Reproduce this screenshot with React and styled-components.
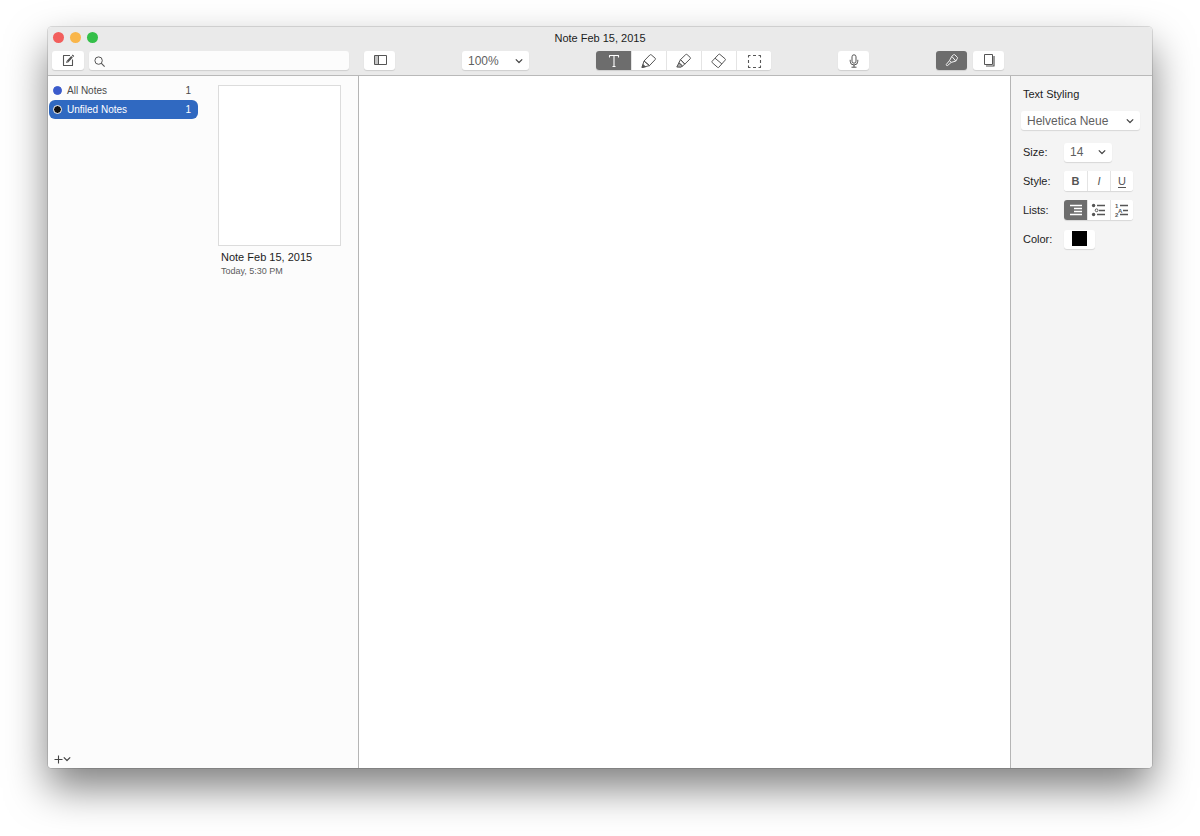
import { useState } from "react";
import styled, { createGlobalStyle } from "styled-components";

const GlobalStyle = createGlobalStyle`
  * {
    box-sizing: border-box;
  }
  body {
    margin: 0;
    background-color: white;
    font-family: "Liberation Sans", Arial, sans-serif;
    font-size: 11px;
    color: #1c1c1c;
  }
  button, input, select {
    font: inherit;
    color: inherit;
    margin: 0;
    padding: 0;
    border: none;
  }
  svg {
    display: block;
    flex: none;
  }
`;

const Desktop = styled.div`
  display: flex;
  min-height: 100vh;
  padding: 27px 48px 68px;
`;

const Window = styled.div`
  flex: 1;
  min-width: 0;
  display: flex;
  flex-direction: column;
  overflow: hidden;
  border-radius: 4px;
  background-color: white;
  box-shadow: 0 0 0 1px rgba(0, 0, 0, 0.12), 0 20px 40px rgba(0, 0, 0, 0.5);
`;

const Header = styled.header`
  background-color: #eaeaea;
  border-bottom: 1px solid #b9b9b9;
`;

const TitleBar = styled.div`
  display: grid;
  grid-template-columns: 1fr auto 1fr;
  align-items: center;
  height: 21px;
  padding: 0 5px;
`;

const Lights = styled.div`
  display: flex;
  gap: 6px;
`;

const Light = styled.button`
  width: 11px;
  height: 11px;
  border-radius: 50%;
  background-color: ${(props) => props.$color};
`;

const Title = styled.h1`
  margin: 0;
  font-size: 11px;
  font-weight: normal;
`;

const Toolbar = styled.div`
  display: flex;
  align-items: center;
  height: 27px;
  padding: 0 0 2px 4px;
`;

const ToolbarLeft = styled.div`
  display: flex;
  gap: 5px;
  width: 312px;
`;

const ToolbarMain = styled.div`
  flex: 1;
  display: flex;
  align-items: center;
  justify-content: space-between;
  padding-right: 148px;
`;

const Pair = styled.div`
  display: flex;
  gap: 6px;
`;

const Button = styled.button`
  display: flex;
  align-items: center;
  justify-content: center;
  width: ${(props) => props.$width || 31}px;
  height: 19px;
  border-radius: 3px;
  color: ${(props) => (props.$active ? "#f4f4f4" : "#555")};
  background-color: ${(props) => (props.$active ? "#6d6d6d" : "white")};
  box-shadow: 0 1px 1px rgba(0, 0, 0, 0.12);
`;

const Search = styled.label`
  display: flex;
  align-items: center;
  gap: 5px;
  width: 260px;
  height: 19px;
  padding: 2px 5px 0;
  border-radius: 3px;
  color: #555;
  background-color: #fcfcfc;
  box-shadow: 0 1px 1px rgba(0, 0, 0, 0.12);
`;

const SearchInput = styled.input`
  flex: 1;
  min-width: 0;
  background: none;
  outline: none;
`;

const Group = styled.div`
  display: flex;
  border-radius: 3px;
  overflow: hidden;
  background-color: white;
  box-shadow: 0 1px 1px rgba(0, 0, 0, 0.12);
`;

const Segment = styled.button`
  display: flex;
  align-items: center;
  justify-content: center;
  width: ${(props) => props.$width}px;
  height: ${(props) => props.$height || 19}px;
  color: ${(props) => (props.$active ? "white" : "#555")};
  background-color: ${(props) => (props.$active ? "#6d6d6d" : "white")};
  & + & {
    border-left: 1px solid #e4e4e4;
  }
`;

const SelectBox = styled.div`
  display: grid;
  align-items: center;
  width: ${(props) => props.$width};
  height: 19px;
  border-radius: 3px;
  color: #5f5f5f;
  background-color: white;
  box-shadow: 0 1px 1px rgba(0, 0, 0, 0.12);
  > * {
    grid-area: 1 / 1;
  }
  > svg {
    justify-self: end;
    margin-right: 6px;
    color: #444;
    pointer-events: none;
  }
`;

const NativeSelect = styled.select`
  appearance: none;
  width: 100%;
  height: 19px;
  padding: 0 20px 0 6px;
  font-size: 12px;
  background: none;
`;

const Body = styled.div`
  flex: 1;
  display: flex;
`;

const Sidebar = styled.aside`
  display: grid;
  grid-template-columns: 149px 123px;
  grid-template-rows: 1fr auto;
  column-gap: 20px;
  width: 311px;
  padding-left: 1px;
  background-color: #fcfcfc;
  border-right: 1px solid #b5b5b5;
`;

const Folders = styled.nav`
  padding-top: 5px;
`;

const Folder = styled.button`
  display: flex;
  align-items: center;
  gap: 5px;
  width: 100%;
  height: 19px;
  padding: 0 7px 0 4px;
  border-radius: 6px;
  font-size: 10px;
  text-align: left;
  color: ${(props) => (props.$active ? "white" : "#4a4a4a")};
  background-color: ${(props) => (props.$active ? "#3069c1" : "transparent")};
`;

const Dot = styled.span`
  width: 9px;
  height: 9px;
  border-radius: 50%;
  background-color: ${(props) => props.$color};
  border: 1px solid ${(props) => props.$ring};
`;

const FolderName = styled.span`
  flex: 1;
`;

const Notes = styled.section`
  padding-top: 9px;
`;

const Note = styled.button`
  display: flex;
  flex-direction: column;
  width: 100%;
  text-align: left;
  background: none;
`;

const Thumbnail = styled.span`
  width: 100%;
  height: 161px;
  margin-bottom: 4px;
  background-color: white;
  border: 1px solid #dcdcdc;
`;

const NoteTitle = styled.span`
  padding-left: 3px;
  line-height: 14px;
`;

const NoteDate = styled.span`
  padding-left: 3px;
  font-size: 9px;
  line-height: 14px;
  color: #5c5c5c;
`;

const AddButton = styled.button`
  display: flex;
  align-items: center;
  width: 24px;
  height: 18px;
  margin-left: 5px;
  color: #444;
  background: none;
`;

const Page = styled.main`
  flex: 1;
  background-color: white;
`;

const Inspector = styled.aside`
  display: flex;
  flex-direction: column;
  width: 142px;
  padding: 12px 12px 0 10px;
  background-color: #f4f4f4;
  border-left: 1px solid #b5b5b5;
`;

const Heading = styled.h2`
  margin: 0 0 10px;
  padding-left: 2px;
  font-size: 11px;
  line-height: 13px;
  font-weight: normal;
`;

const Fields = styled.div`
  display: grid;
  grid-template-columns: 41px auto;
  grid-auto-rows: 20px;
  row-gap: 9px;
  align-items: center;
  justify-content: start;
  padding: 12px 0 0 2px;
`;

const Label = styled.label`
  color: #1c1c1c;
`;

const Swatch = styled.input`
  appearance: none;
  display: block;
  width: 31px;
  height: 19px;
  padding: 1px 8px 3px;
  border-radius: 3px;
  background-color: white;
  box-shadow: 0 1px 1px rgba(0, 0, 0, 0.12);
  &::-webkit-color-swatch-wrapper {
    padding: 0;
  }
  &::-webkit-color-swatch {
    border: none;
    border-radius: 0;
  }
`;

const Bold = styled.b`
  font-size: 11px;
`;

const Italic = styled.i`
  font-size: 11px;
`;

const Underline = styled.u`
  font-size: 11px;
  text-underline-offset: 2px;
`;

const Icon = ({ width = 16, height = 16, children }) => (
  <svg
    width={width}
    height={height}
    viewBox={`0 0 ${width} ${height}`}
    fill="none"
    stroke="currentColor"
    strokeWidth="1"
    strokeLinejoin="round"
    aria-hidden="true"
  >
    {children}
  </svg>
);

const ChevronIcon = () => (
  <Icon width={8} height={6}>
    <path d="M.8 1.4 4 4.5 7.2 1.4" strokeWidth="1.2" />
  </Icon>
);

const ComposeIcon = () => (
  <Icon>
    <path d="M10 2.5H3.5v10h9V6.5" strokeWidth="1.1" />
    <path d="M7.6 8.4 12 3.8" strokeWidth="2.2" />
    <path d="m12.6 3.2.9-.9" strokeWidth="2.2" />
    <path d="m6 10.1.7-2.4 1.8 1.6z" fill="currentColor" stroke="none" />
  </Icon>
);

const SearchIcon = () => (
  <Icon width={11} height={11}>
    <circle cx="4.6" cy="4.6" r="3.7" />
    <path d="m7.2 7.2 3.4 3.4" strokeWidth="1.1" />
  </Icon>
);

const PanelIcon = () => (
  <Icon>
    <rect x="2.5" y="2.5" width="12" height="9" />
    <path d="M3 3h3v8H3z" fill="#c4c4c4" stroke="none" />
    <path d="M6.5 2.5v9" />
  </Icon>
);

const TextIcon = () => (
  <Icon>
    <path d="M3.5 4.5v-2h9v2M8 2.5v11M6.5 13.5h3" strokeWidth="1.1" />
  </Icon>
);

const PenIcon = () => (
  <Icon>
    <path d="M3 8 8.8 2q.7-.7 1.5-.1l3.8 3.2q.8.7.1 1.5l-5.7 6z" />
    <path d="M3 8 1 14.5l7.5-1.9M3 8l5.5 4.6" />
    <path d="m1 14.5.9-2.9 2.5 2.1z" fill="currentColor" />
  </Icon>
);

const HighlighterIcon = () => (
  <Icon>
    <path d="m4.5 6.6 5.2-5q.7-.6 1.4 0l3.1 2.8q.7.7 0 1.4l-5.4 5.3z" />
    <path d="M4.5 6.6 2.9 9.8l3.6 3.2 2.3-1.9M4.5 6.6l4.3 4.5" />
    <path d="M2.9 9.8.8 14l4 .2L6.5 13z" fill="#aaa" />
  </Icon>
);

const EraserIcon = () => (
  <Icon>
    <path d="m1.1 8.3 6.5-6.9q.6-.6 1.3 0l5.2 4.4q.7.6.1 1.3l-6.4 7.2q-.6.6-1.3 0L1.2 9.6q-.7-.6-.1-1.3Z" />
    <path d="m4 5.2 6.9 5.7" />
  </Icon>
);

const MarqueeIcon = () => (
  <Icon>
    <path
      d="M2.5 4.5v-2h2M12.5 2.5h2v2M14.5 12.5v2h-2M4.5 14.5h-2v-2M7 2.5h3M7 14.5h3M2.5 7v3M14.5 7v3"
      strokeWidth="1.1"
    />
  </Icon>
);

const MicIcon = () => (
  <Icon>
    <rect x="6" y="1.8" width="4" height="8.4" rx="2" />
    <path d="M4.2 6.8v1.4a3.8 3.8 0 0 0 7.6 0V6.8M8 12v2.2M5.5 14.2h5" />
  </Icon>
);

const BrushIcon = () => (
  <Icon>
    <path d="m7.8 3.4 1.7-1.7q.6-.5 1.3.1l2.4 2.3q.6.6.2 1.3l-1.6 2.7L7.2 9.4 5.5 7.6Z" />
    <path d="M5.5 7.6 2.4 11.3q-.4.6.1 1.1t1.1.1l3.6-3.1M7.8 3.4l4 4.7" />
  </Icon>
);

const PagesIcon = () => (
  <Icon>
    <rect x="3.5" y="1.5" width="8" height="10" />
    <path d="M13 3v10H5" strokeWidth="1.2" />
  </Icon>
);

const AlignIcon = () => (
  <Icon>
    <path d="M2 3.5h12M6 6.5h8M6 9.5h8M2 12.5h12" strokeWidth="1.3" />
  </Icon>
);

const BulletIcon = () => (
  <Icon>
    <path d="M6 3.5h8M8 8.5h6M6 12.5h8" strokeWidth="1.4" />
    <circle cx="2.6" cy="3.5" r="1.7" fill="currentColor" stroke="none" />
    <circle cx="2.6" cy="12.5" r="1.7" fill="currentColor" stroke="none" />
    <circle cx="5.6" cy="8.3" r="1.4" />
  </Icon>
);

const NumberIcon = () => (
  <Icon>
    <path d="M6 3.5h8M9 8.5h5M6 12.5h8" strokeWidth="1.4" />
    <g fill="currentColor" stroke="none" fontSize="6" fontWeight="bold">
      <text x="1" y="6">1</text>
      <text x="4" y="11">A</text>
      <text x="1" y="15">2</text>
    </g>
  </Icon>
);

const PlusIcon = () => (
  <Icon width={9} height={9}>
    <path d="M4.5.5v8M.5 4.5h8" strokeWidth="1.1" />
  </Icon>
);

const tools = [
  { name: "Text", icon: TextIcon },
  { name: "Pen", icon: PenIcon },
  { name: "Highlighter", icon: HighlighterIcon },
  { name: "Eraser", icon: EraserIcon },
  { name: "Selection", icon: MarqueeIcon },
];

const lists = [
  { name: "No list", icon: AlignIcon },
  { name: "Bulleted list", icon: BulletIcon },
  { name: "Numbered list", icon: NumberIcon },
];

const styles = [
  { name: "Bold", mark: <Bold>B</Bold> },
  { name: "Italic", mark: <Italic>I</Italic> },
  { name: "Underline", mark: <Underline>U</Underline> },
];

const folders = [
  { name: "All Notes", count: 1, color: "#3b5bcb", ring: "#3b5bcb" },
  { name: "Unfiled Notes", count: 1, color: "#111", ring: "white" },
];

const Select = ({ width, options, ...rest }) => (
  <SelectBox $width={width}>
    <NativeSelect {...rest}>
      {options.map((option) => (
        <option key={option}>{option}</option>
      ))}
    </NativeSelect>
    <ChevronIcon />
  </SelectBox>
);

const App = () => {
  const [tool, setTool] = useState("Text");
  const [list, setList] = useState("No list");
  const [folder, setFolder] = useState("Unfiled Notes");

  return (
    <Desktop>
      <GlobalStyle />
      <Window>
        <Header>
          <TitleBar>
            <Lights>
              <Light $color="#f25e5c" aria-label="Close" />
              <Light $color="#f9b64b" aria-label="Minimize" />
              <Light $color="#34bf49" aria-label="Zoom" />
            </Lights>
            <Title>Note Feb 15, 2015</Title>
          </TitleBar>
          <Toolbar>
            <ToolbarLeft>
              <Button $width={32} aria-label="New note">
                <ComposeIcon />
              </Button>
              <Search>
                <SearchIcon />
                <SearchInput type="search" aria-label="Search notes" />
              </Search>
            </ToolbarLeft>
            <ToolbarMain>
              <Button aria-label="Toggle sidebar">
                <PanelIcon />
              </Button>
              <Select
                width="67px"
                aria-label="Page zoom"
                options={["100%", "150%", "200%"]}
              />
              <Group>
                {tools.map(({ name, icon: ToolIcon }) => (
                  <Segment
                    key={name}
                    $width={35}
                    $active={tool === name}
                    aria-label={name}
                    aria-pressed={tool === name}
                    onClick={() => setTool(name)}
                  >
                    <ToolIcon />
                  </Segment>
                ))}
              </Group>
              <Button aria-label="Record audio">
                <MicIcon />
              </Button>
              <Pair>
                <Button $active aria-label="Styling">
                  <BrushIcon />
                </Button>
                <Button aria-label="Pages">
                  <PagesIcon />
                </Button>
              </Pair>
            </ToolbarMain>
          </Toolbar>
        </Header>
        <Body>
          <Sidebar>
            <Folders>
              {folders.map(({ name, count, color, ring }) => (
                <Folder
                  key={name}
                  $active={folder === name}
                  onClick={() => setFolder(name)}
                >
                  <Dot $color={color} $ring={ring} />
                  <FolderName>{name}</FolderName>
                  <span>{count}</span>
                </Folder>
              ))}
            </Folders>
            <Notes>
              <Note>
                <Thumbnail />
                <NoteTitle>Note Feb 15, 2015</NoteTitle>
                <NoteDate>Today, 5:30 PM</NoteDate>
              </Note>
            </Notes>
            <AddButton aria-label="Add folder">
              <PlusIcon />
              <ChevronIcon />
            </AddButton>
          </Sidebar>
          <Page />
          <Inspector>
            <Heading>Text Styling</Heading>
            <Select
              width="100%"
              aria-label="Font"
              options={["Helvetica Neue", "Georgia", "Courier"]}
            />
            <Fields>
              <Label htmlFor="size">Size:</Label>
              <Select id="size" width="48px" options={["14", "18", "24"]} />
              <Label as="span">Style:</Label>
              <Group>
                {styles.map(({ name, mark }) => (
                  <Segment
                    key={name}
                    $width={23}
                    $height={20}
                    aria-label={name}
                  >
                    {mark}
                  </Segment>
                ))}
              </Group>
              <Label as="span">Lists:</Label>
              <Group>
                {lists.map(({ name, icon: ListIcon }) => (
                  <Segment
                    key={name}
                    $width={23}
                    $height={20}
                    $active={list === name}
                    aria-label={name}
                    aria-pressed={list === name}
                    onClick={() => setList(name)}
                  >
                    <ListIcon />
                  </Segment>
                ))}
              </Group>
              <Label htmlFor="color">Color:</Label>
              <Swatch id="color" type="color" defaultValue="#000000" />
            </Fields>
          </Inspector>
        </Body>
      </Window>
    </Desktop>
  );
};

export default App;
